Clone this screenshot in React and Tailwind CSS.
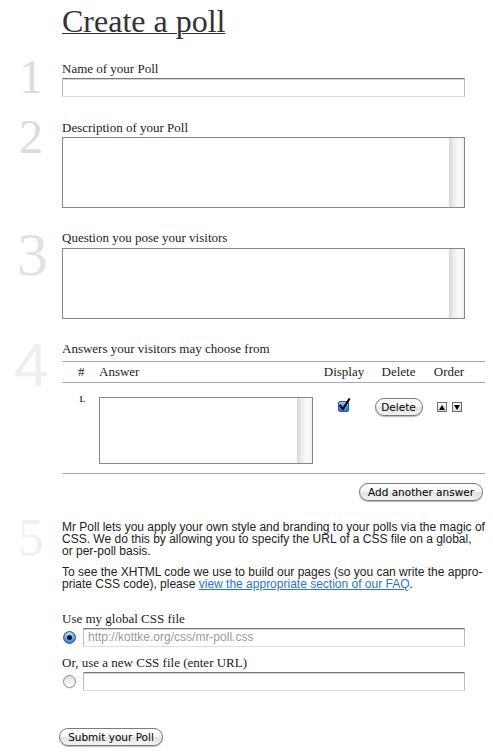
import React from "react";

const serif = "font-['Liberation_Serif',serif]";
const sans = "font-['Liberation_Sans',Arial,sans-serif]";
const btnFont = "font-['DejaVu_Sans',sans-serif]";

function Digit({ children, className }) {
  return (
    <div className="w-[62px] shrink-0">
      <div className={`h-0 leading-none select-none ${className}`}>{children}</div>
    </div>
  );
}

function Label({ children }) {
  return <div className={`${serif} text-[13px] leading-[16px] text-[#222]`}>{children}</div>;
}

function TextInput({ className, placeholder }) {
  return (
    <div
      className={`h-[19px] bg-white border border-t-[#7a7a7a] border-x-[#bdbdbd] border-b-[#dedede] shadow-[inset_0_1px_0_#d2d2d2] pl-[4px] ${sans} text-[12px] leading-[17px] text-[#9a9a9a] ${className}`}
    >
      {placeholder}
    </div>
  );
}

function TextArea({ className }) {
  return (
    <div className={`flex justify-end bg-white border border-[#878787] ${className}`}>
      <div className="w-[15px] h-full bg-[linear-gradient(to_right,#d6d6d6,#ececec_30%,#fafafa_70%,#f1f1f1)]" />
    </div>
  );
}

function Button({ children, className }) {
  return (
    <div
      className={`h-[18px] rounded-full border border-[#7b7b7b] bg-[linear-gradient(#ffffff,#f6f6f6_45%,#e2e2e2_55%,#f3f3f3)] shadow-[0_1px_1px_rgba(0,0,0,0.28)] flex items-center justify-center ${btnFont} text-[10.5px] leading-none text-black ${className}`}
    >
      {children}
    </div>
  );
}

function Checkbox() {
  return (
    <svg width="14" height="14" viewBox="0 0 14 14">
      <defs>
        <linearGradient id="cb" x1="0" y1="0" x2="0" y2="1">
          <stop offset="0" stopColor="#a9d0fb" />
          <stop offset="0.5" stopColor="#4b91e6" />
          <stop offset="1" stopColor="#2a6fd0" />
        </linearGradient>
      </defs>
      <rect x="1.5" y="3.5" width="10" height="10" rx="1.5" fill="url(#cb)" stroke="#2f5c99" />
      <path d="M3.3 7.6 L5.8 11 L12.2 1.2" fill="none" stroke="#000" strokeWidth="2" strokeLinecap="square" />
    </svg>
  );
}

function OrderBtn({ up }) {
  return (
    <div className="w-[10px] h-[10px] border border-[#6e6e6e] bg-[linear-gradient(#ffffff,#d8d8d8)] flex items-center justify-center">
      <svg width="6" height="5" viewBox="0 0 6 5">
        {up ? <path d="M3 0 L6 5 L0 5 Z" fill="#000" /> : <path d="M0 0 L6 0 L3 5 Z" fill="#000" />}
      </svg>
    </div>
  );
}

function Radio({ checked }) {
  if (checked) {
    return (
      <div className="w-[13px] h-[13px] rounded-full border border-[#2b5797] bg-[radial-gradient(circle_at_50%_30%,#d4ebff,#5b9ff0_55%,#1e5bb8)] flex items-center justify-center shrink-0">
        <div className="w-[5px] h-[5px] rounded-full bg-[#111]" />
      </div>
    );
  }
  return (
    <div className="w-[13px] h-[13px] rounded-full border border-[#8e8e8e] bg-[linear-gradient(#dedede,#ffffff)] shadow-[0_1px_0_rgba(0,0,0,0.1)] shrink-0" />
  );
}

export default function App() {
  return (
    <div className="w-[493px] h-[755px] bg-white overflow-hidden text-[#222]">
      <h1 className={`${serif} pl-[62px] pt-[3px] text-[32px] leading-[36px] text-[#333] underline decoration-1`}>
        Create a poll
      </h1>

      {/* 1 */}
      <div className="flex mt-[22px]">
        <Digit className={`${serif} text-[48px] text-[#dcdcdc] -mt-[8px] ml-[19px]`}>1</Digit>
        <div className="w-[403px]">
          <Label>Name of your Poll</Label>
          <TextInput className="mt-[1px] w-[403px]" />
        </div>
      </div>

      {/* 2 */}
      <div className="flex mt-[23px]">
        <Digit className={`${serif} text-[48px] text-[#dcdcdc] -mt-[7px] ml-[19px]`}>2</Digit>
        <div className="w-[403px]">
          <Label>Description of your Poll</Label>
          <TextArea className="mt-[1px] w-[403px] h-[71px]" />
        </div>
      </div>

      {/* 3 */}
      <div className="flex mt-[22px]">
        <Digit className={`${serif} text-[62px] text-[#e2e2e2] -mt-[7px] ml-[17px]`}>3</Digit>
        <div className="w-[403px]">
          <Label>Question you pose your visitors</Label>
          <TextArea className="mt-[2px] w-[403px] h-[71px]" />
        </div>
      </div>

      {/* 4 */}
      <div className="flex mt-[22px]">
        <Digit className={`${sans} text-[62px] text-[#eeeeee] -mt-[7px] ml-[14px]`}>4</Digit>
        <div className="w-[423px]">
          <Label>Answers your visitors may choose from</Label>
          <div className="mt-[4px] border-t border-[#aaaaaa]">
            <div className={`grid grid-cols-[37px_219px_52px_57px_44px_14px] h-[20px] ${serif} text-[13px] leading-[20px] text-[#222] border-b border-[#aaaaaa] box-content`}>
              <div className="pl-[16px]">#</div>
              <div>Answer</div>
              <div className="text-center whitespace-nowrap">Display</div>
              <div className="text-center">Delete</div>
              <div className="text-center">Order</div>
              <div />
            </div>
            <div className="grid grid-cols-[37px_219px_52px_57px_44px_14px] items-start pt-[14px] pb-[9px] border-b border-[#aaaaaa]">
              <div className={`${serif} font-bold text-[8px] leading-[8px] pl-[17px] -mt-[1px]`}>1.</div>
              <TextArea className="w-[214px] h-[67px]" />
              <div className="flex justify-center mt-[1px]">
                <Checkbox />
              </div>
              <div className="flex justify-center mt-[1px]">
                <Button className="w-[48px]">Delete</Button>
              </div>
              <div className="flex justify-center gap-[5px] mt-[5px]">
                <OrderBtn up />
                <OrderBtn />
              </div>
              <div />
            </div>
          </div>
          <div className="flex justify-end mt-[9px] pr-[2px]">
            <Button className="w-[124px]">Add another answer</Button>
          </div>
        </div>
      </div>

      {/* 5 */}
      <div className="flex mt-[20px]">
        <Digit className={`${serif} text-[52px] text-[#f0f0f0] -mt-[9px] ml-[18px]`}>5</Digit>
        <div className="w-[423px]">
          <p className={`${sans} text-[12px] leading-[12px] text-[#222] whitespace-nowrap`}>
            Mr Poll lets you apply your own style and branding to your polls via the magic of
            <br />
            CSS. We do this by allowing you to specify the URL of a CSS file on a global,
            <br />
            or per-poll basis.
          </p>
          <p className={`${sans} text-[12px] leading-[12px] text-[#222] whitespace-nowrap mt-[9px]`}>
            To see the XHTML code we use to build our pages (so you can write the appro-
            <br />
            priate CSS code), please{" "}
            <a href="#" className="text-[#2a73d6] underline">
              view the appropriate section of our FAQ
            </a>
            .
          </p>

          <div className="mt-[21px]">
            <Label>Use my global CSS file</Label>
          </div>
          <div className="flex items-center gap-[7px] mt-[1px] pl-[1px]">
            <Radio checked />
            <TextInput className="w-[382px]" placeholder="http://kottke.org/css/mr-poll.css" />
          </div>

          <div className="mt-[8px]">
            <Label>Or, use a new CSS file (enter URL)</Label>
          </div>
          <div className="flex items-center gap-[7px] mt-[1px] pl-[1px]">
            <Radio />
            <TextInput className="w-[382px]" />
          </div>
        </div>
      </div>

      <div className="pl-[59px] mt-[37px]">
        <Button className="w-[104px]">Submit your Poll</Button>
      </div>
    </div>
  );
}
